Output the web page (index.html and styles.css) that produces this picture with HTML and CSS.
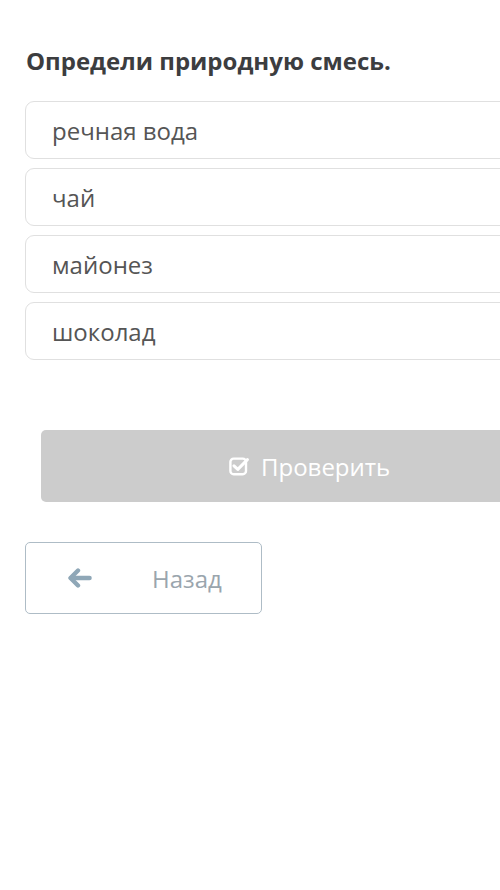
FILE: index.html
```html
<!DOCTYPE html>
<html lang="ru">
<head>
<meta charset="utf-8">
<link rel="stylesheet" href="styles.css">
</head>
<body>
<div class="page">
  <h1 class="question">Определи природную смесь.</h1>
  <div class="options">
    <div class="option">речная вода</div>
    <div class="option">чай</div>
    <div class="option">майонез</div>
    <div class="option">шоколад</div>
  </div>
  <div class="check-row">
    <button class="check-btn" type="button">
      <svg class="check-icon" viewBox="0 0 20 20" width="20" height="20" aria-hidden="true">
        <rect x="1.4" y="2.6" width="15.6" height="15.6" rx="3.2" fill="none" stroke="#fff" stroke-width="2.4"/>
        <path d="M5 9.8 L8.8 13.4 L18.4 3.6" fill="none" stroke="#fff" stroke-width="3" stroke-linecap="round" stroke-linejoin="round"/>
      </svg>
      <span>Проверить</span>
    </button>
  </div>
  <button class="back-btn" type="button">
    <svg class="back-icon" viewBox="0 0 24 20" width="24" height="20" aria-hidden="true">
      <path d="M10 2.5 L2.5 10 L10 17.5" fill="none" stroke="#8fa7b7" stroke-width="4.4" stroke-linecap="round" stroke-linejoin="round"/>
      <path d="M3.5 10 H21.5" fill="none" stroke="#8fa7b7" stroke-width="4.6" stroke-linecap="round"/>
    </svg>
    <span class="back-text">Назад</span>
  </button>
</div>
</body>
</html>
```

FILE: styles.css
```css
html, body {
  margin: 0;
  padding: 0;
  background: #fff;
}
body {
  font-family: "Open Sans", "Noto Sans", sans-serif;
  overflow: hidden;
}
.page {
  width: 560px;
  padding: 44px 0 0 25px;
}
.question {
  margin: 0 0 23px 1px;
  font-size: 24px;
  font-weight: 700;
  color: #3c3d3f;
  line-height: 34px;
}
.options {
  display: flex;
  flex-direction: column;
  gap: 9px;
}
.option {
  height: 56px;
  border: 1px solid #e0e0e0;
  border-radius: 9px;
  padding: 0 0 0 26px;
  display: flex;
  align-items: center;
  font-size: 24px;
  color: #555;
}
.check-row {
  padding: 70px 0 0 16px;
}
.check-btn {
  width: 100%;
  height: 72px;
  border: none;
  border-radius: 5px;
  background: #cccccc;
  color: #fff;
  font-family: inherit;
  font-size: 24px;
  display: flex;
  align-items: center;
  justify-content: flex-start;
  gap: 12px;
  padding: 0 0 0 188px;
}
.check-icon {
  display: block;
}
.back-btn {
  margin-top: 40px;
  width: 237px;
  height: 72px;
  border: 1.5px solid #aebcc6;
  border-radius: 5px;
  background: #fff;
  font-family: inherit;
  font-size: 24px;
  color: #9aa5ad;
  display: flex;
  align-items: center;
  padding: 0 0 0 42px;
}
.back-icon {
  display: block;
}
.back-text {
  margin-left: 60px;
}
```
